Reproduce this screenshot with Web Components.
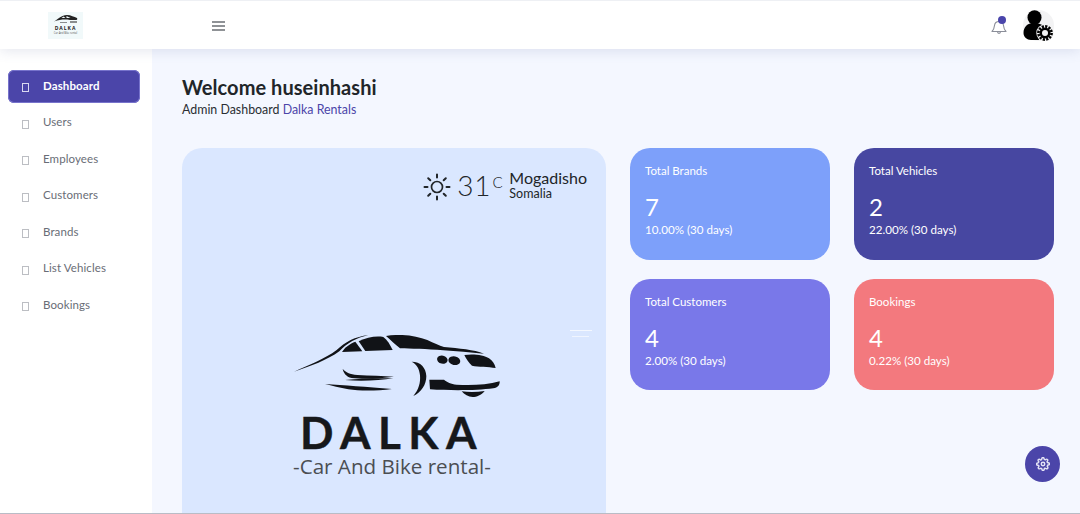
<!DOCTYPE html>
<html lang="en">
<head>
<meta charset="utf-8">
<title>Dalka Rentals</title>
<style>
html,body{margin:0;padding:0;height:514px;overflow:hidden;background:#f4f7ff;}
body{font-family:"Lato","Open Sans",sans-serif;}
</style>
</head>
<body>
<app-shell>
    <top-bar slot="top"></top-bar>
    <side-nav slot="side">
        <nav-item active>Dashboard</nav-item>
        <nav-item>Users</nav-item>
        <nav-item>Employees</nav-item>
        <nav-item>Customers</nav-item>
        <nav-item>Brands</nav-item>
        <nav-item>List Vehicles</nav-item>
        <nav-item>Bookings</nav-item>
    </side-nav>
    <dash-board></dash-board>
</app-shell>
<script>
class appShell extends HTMLElement{
    constructor(){
        super();
        this.attachShadow({ mode: "open" });
    }
    connectedCallback(){
        this.shadowRoot.innerHTML = `
            <style>
                :host{
                    display: flex;
                    flex-direction: column;
                    height: 514px;
                    box-sizing: border-box;
                    border-bottom: 1px solid #b9bcc6;
                    overflow: hidden;
                    position: relative;
                }
                .body{
                    flex: 1;
                    display: flex;
                    min-height: 0;
                }
                .content{
                    flex: 1;
                    min-width: 0;
                }
            </style>
            <slot name="top"></slot>
            <div class="body">
                <slot name="side"></slot>
                <div class="content"><slot></slot></div>
            </div>
        `;
    }
}

class topBar extends HTMLElement{
    constructor(){
        super();
        this.attachShadow({ mode: "open" });
    }
    connectedCallback(){
        this.shadowRoot.innerHTML = `
            <style>
                :host{
                    display: flex;
                    align-items: center;
                    height: 49px;
                    box-sizing: border-box;
                    border-top: 1px solid #eef0f4;
                    background: #fff;
                    box-shadow: 0 2px 12px rgba(90,100,150,.16);
                    position: relative;
                    z-index: 2;
                    padding: 0 26px 0 48px;
                }
                .logo{
                    width: 35px;
                    height: 27px;
                    background: #f1f9fa;
                    display: flex;
                    flex-direction: column;
                    align-items: center;
                    color: #222;
                    font-family: "Open Sans", sans-serif;
                    line-height: 1;
                    overflow: hidden;
                }
                .logo svg{ width: 25px; height: 11px; margin-top: 2px; display: block; }
                .logo b{ font-size: 5px; letter-spacing: 1px; margin-top: 1px; }
                .logo span{ font-size: 2.600px; color: #555; margin-top: 1px; white-space: nowrap; }
                .menu{
                    margin: 2px 0 0 129px;
                    width: 13px;
                    height: 10px;
                    border-top: 2px solid #8f9296;
                    border-bottom: 2px solid #8f9296;
                    box-sizing: border-box;
                    position: relative;
                }
                .menu::after{
                    content: "";
                    position: absolute;
                    left: 0; right: 0; top: 2px;
                    height: 2px;
                    background: #8f9296;
                }
                .spacer{ flex: 1; }
                .bell{ position: relative; width: 16px; height: 20px; margin: 2px 16px 0 0; }
                .bell svg{ display: block; }
                .bell i{
                    position: absolute;
                    top: 0; left: 7px;
                    width: 8px; height: 8px;
                    border-radius: 50%;
                    background: #4a45ab;
                }
                .avatar{ width: 31px; height: 31px; display: block; }
            </style>
            <div class="logo">
                <svg viewBox="0 0 50 22"><path fill="#222" d="M2 15C12 9 16 3 28 2c8 0 14 4 20 6 1 2 1 3-1 4H34C24 10 14 11 2 15z"/><path fill="#f1f9fa" d="M17 8l4-3 4 3zM27 8V4l8 4z"/><path fill="#222" d="M14 17h14v1H14zM34 15h14v2H34z"/></svg>
                <b>DALKA</b>
                <span>Car And Bike rental</span>
            </div>
            <div class="menu"></div>
            <div class="spacer"></div>
            <div class="bell">
                <svg width="16" height="20" viewBox="0 0 16 20" fill="none" stroke="#8b8e99" stroke-width="1.100" stroke-linejoin="round"><path d="M1 15.500c1.500-1.500 2.200-3 2.500-6 .3-2.500 2-4 4.500-4s4.200 1.500 4.500 4c.3 3 1 4.500 2.500 6z"/><path d="M6.500 15.500c0 2.500 3 2.500 3 0"/></svg>
                <i></i>
            </div>
            <svg class="avatar" viewBox="0 0 31 31">
                <circle cx="15.500" cy="15.500" r="15.500" fill="#f3f3f4"/>
                <ellipse cx="11.500" cy="7.500" rx="7" ry="7.300" fill="#000"/>
                <path fill="#000" d="M.5 23c0-6 4-10 10-10 4 0 8 1 10 3-4 2-6 8-4 14H8c-4 0-7.500-3-7.500-7z"/>
                <g transform="translate(22 23)">
                    <circle r="8.700" fill="#f3f3f4"/>
                    <circle r="6.600" fill="none" stroke="#000" stroke-width="2.600" stroke-dasharray="2.200 1.250"/>
                    <circle r="5.500" fill="#000"/>
                    <circle r="3" fill="#f3f3f4"/>
                </g>
            </svg>
        `;
    }
}

class sideNav extends HTMLElement{
    constructor(){
        super();
        this.attachShadow({ mode: "open" });
    }
    connectedCallback(){
        this.shadowRoot.innerHTML = `
            <style>
                :host{
                    display: flex;
                    flex-direction: column;
                    gap: 3.500px;
                    width: 152px;
                    flex: none;
                    box-sizing: border-box;
                    background: #fff;
                    padding: 21px 12px 0 8px;
                }
            </style>
            <slot></slot>
        `;
    }
}

class navItem extends HTMLElement{
    constructor(){
        super();
        this.attachShadow({ mode: "open" });
    }
    connectedCallback(){
        this.shadowRoot.innerHTML = `
            <style>
                :host{
                    display: flex;
                    align-items: center;
                    height: 33px;
                    padding: 0 0 0 14px;
                    border-radius: 6px;
                    font-size: 11.500px;
                    color: #696d76;
                    letter-spacing: .1px;
                }
                :host([active]){
                    background: #4b45a9;
                    color: #fff;
                    font-weight: 700;
                    box-shadow: 0 0 0 1px #7773cc inset;
                }
                .ico{
                    width: 5px;
                    height: 7px;
                    border: 1px solid #bcbec3;
                    margin: 2px 14px 0 0;
                    flex: none;
                }
                :host([active]) .ico{ border-color: #d9d8f0; }
                .lbl{ margin-top: -3px; }
                :host([active]) .lbl{ margin-top: -2px; }
            </style>
            <span class="ico"></span><span class="lbl"><slot></slot></span>
        `;
    }
}

class dashBoard extends HTMLElement{
    constructor(){
        super();
        this.attachShadow({ mode: "open" });
    }
    connectedCallback(){
        this.shadowRoot.innerHTML = `
            <style>
                :host{
                    display: block;
                    padding: 25px 26px 0 30px;
                    color: #212529;
                }
                h1{
                    margin: 0;
                    font-size: 20px;
                    line-height: 27px;
                    font-weight: 700;
                    letter-spacing: .05px;
                }
                p{
                    margin: 0;
                    font-size: 12.400px;
                    line-height: 18px;
                    color: #2a2e33;
                }
                p span{ color: #4b45a9; }
                .grid{
                    display: grid;
                    grid-template-columns: 424px 200px 200px;
                    grid-template-rows: 112px 111px;
                    column-gap: 24px;
                    row-gap: 19px;
                    margin-top: 29px;
                }
                brand-hero{ grid-row: 1 / span 3; }
            </style>
            <h1>Welcome huseinhashi</h1>
            <p>Admin Dashboard <span>Dalka Rentals</span></p>
            <div class="grid">
                <brand-hero></brand-hero>
                <stat-card color="#7da0fa" title="Total Brands" value="7" note="10.00% (30 days)"></stat-card>
                <stat-card color="#4747a1" title="Total Vehicles" value="2" note="22.00% (30 days)"></stat-card>
                <stat-card color="#7978e9" title="Total Customers" value="4" note="2.00% (30 days)"></stat-card>
                <stat-card color="#f3797e" title="Bookings" value="4" note="0.22% (30 days)"></stat-card>
            </div>
            <fab-button></fab-button>
        `;
    }
}

class statCard extends HTMLElement{
    constructor(){
        super();
        this.attachShadow({ mode: "open" });
    }
    connectedCallback(){
        this.shadowRoot.innerHTML = `
            <style>
                :host{
                    display: block;
                    box-sizing: border-box;
                    border-radius: 20px;
                    padding: 15px 15px;
                    color: #fff;
                    background: ${this.getAttribute("color")};
                }
                .t{ font-size: 11.500px; line-height: 15px; }
                .v{ font-size: 24px; line-height: 30px; margin-top: 14px; }
                .n{ font-size: 11.600px; line-height: 15px; }
            </style>
            <div class="t">${this.getAttribute("title")}</div>
            <div class="v">${this.getAttribute("value")}</div>
            <div class="n">${this.getAttribute("note")}</div>
        `;
    }
}

class brandHero extends HTMLElement{
    constructor(){
        super();
        this.attachShadow({ mode: "open" });
    }
    connectedCallback(){
        this.shadowRoot.innerHTML = `
            <style>
                :host{
                    display: block;
                    height: 400px;
                    border-radius: 20px;
                    background: #dae7ff;
                    position: relative;
                    color: #212529;
                }
                .logo{
                    display: flex;
                    flex-direction: column;
                    align-items: center;
                    width: 250px;
                    margin: 133px 0 0 88px;
                }
                .logo svg{ display: block; width: 250px; height: 80px; }
                .name{
                    font-family: "Lato", sans-serif;
                    font-weight: 700;
                    font-size: 44px;
                    line-height: 42px;
                    letter-spacing: 7.500px;
                    color: #16181b;
                    margin: -4px 0 0 -6px;
                    -webkit-text-stroke: .4px #16181b;
                }
                .tag{
                    font-family: "Open Sans", sans-serif;
                    font-size: 20.600px;
                    line-height: 26px;
                    color: #4b4e52;
                    margin: 0 0 0 -6px;
                    white-space: nowrap;
                }
                .bars{
                    position: absolute;
                    left: 388px;
                    top: 182px;
                    width: 22px;
                    height: 8px;
                    border-top: 1.500px solid rgba(255,255,255,.7);
                    filter: blur(.6px);
                }
                .bars::after{
                    content: "";
                    position: absolute;
                    left: 2px; right: 3px; top: 4.500px;
                    height: 1.500px;
                    background: rgba(255,255,255,.6);
                }
            </style>
            <weather-box></weather-box>
            <div class="bars"></div>
            <div class="logo">
                <svg viewBox="0 0 750 240" preserveAspectRatio="none">
                    <g transform="translate(0 -47)" fill="#111317">
                        <path d="M72 157C120 136 165 118 200 92 225 68 255 52 296 47 258 56 232 70 208 96 172 122 122 141 72 157z"/>
                        <path d="M216 98C224 84 240 73 256 67L277 96z"/>
                        <path d="M266 66C290 54 318 49 340 53 352 62 360 76 368 92L286 95z"/>
                        <path d="M348 50C395 42 440 50 472 62 492 71 507 79 522 83 567 87 612 91 642 103 600 100 560 95 520 93 470 89 420 88 390 87 375 75 362 62 348 50z"/>
                        <ellipse cx="517" cy="121" rx="16" ry="12" transform="rotate(12 517 121)"/>
                        <ellipse cx="553" cy="124" rx="18" ry="13" transform="rotate(12 553 124)"/>
                        <path d="M583 107C610 103 642 107 657 117 668 125 674 134 677 146 655 142 625 143 606 139 596 130 588 118 583 107z"/>
                        <path d="M425 127C452 127 468 145 469 170 469 196 454 219 430 230 446 212 452 190 450 168 448 148 440 135 425 127z"/>
                        <path d="M478 181L522 181C532 189 542 194 560 196 600 199 650 197 689 186 690 197 683 205 670 207 620 214 540 214 480 210z"/>
                        <path d="M575 216C595 219 620 219 644 215 634 228 620 233 608 233 595 233 583 226 575 216z"/>
                        <path d="M218 148C225 158 240 165 262 167 300 169 340 170 372 172 330 178 280 180 245 176 228 172 220 160 218 148z"/>
                        <path d="M225 182C270 177 320 176 370 177 330 183 275 187 225 182z"/>
                        <path d="M165 194C220 197 290 203 366 209 320 215 270 215 235 210 210 205 185 199 165 194z"/>
                    </g>
                </svg>
                <div class="name">DALKA</div>
                <div class="tag">-Car And Bike rental-</div>
            </div>
        `;
    }
}

class weatherBox extends HTMLElement{
    constructor(){
        super();
        this.attachShadow({ mode: "open" });
    }
    connectedCallback(){
        this.shadowRoot.innerHTML = `
            <style>
                :host{
                    display: flex;
                    align-items: flex-start;
                    justify-content: flex-end;
                    padding: 20px 19px 0 0;
                    height: 34px;
                    color: #212529;
                }
                svg{ margin: 5px 6px 0 0; flex: none; }
                .deg{ font-size: 28px; line-height: 34px; letter-spacing: .8px; font-weight: 300; }
                sup{ font-size: 15px; line-height: 1; vertical-align: baseline; position: relative; top: -8px; margin-left: 1px; font-weight: 300; }
                .loc{ margin-left: 6px; }
                .city{ font-size: 16px; line-height: 20px; }
                .country{ font-size: 12.500px; line-height: 12px; margin-top: 0; }
            </style>
            <svg width="28" height="28" viewBox="0 0 28 28" fill="none" stroke="#212529" stroke-width="2" stroke-linecap="round">
                <circle cx="14" cy="14" r="5.500" stroke-width="1.700"/>
                <path d="M14 1.500v3M14 23.500v3M1.500 14h3M23.500 14h3M5.200 5.200l2.100 2.100M20.700 20.700l2.100 2.100M5.200 22.800l2.100-2.100M20.700 7.300l2.100-2.100"/>
            </svg>
            <div class="deg">31<sup>C</sup></div>
            <div class="loc">
                <div class="city">Mogadisho</div>
                <div class="country">Somalia</div>
            </div>
        `;
    }
}

class fabButton extends HTMLElement{
    constructor(){
        super();
        this.attachShadow({ mode: "open" });
    }
    connectedCallback(){
        this.shadowRoot.innerHTML = `
            <style>
                :host{
                    position: absolute;
                    left: 1025px;
                    top: 446px;
                    width: 35px;
                    height: 36px;
                    border-radius: 50%;
                    background: #4b45a9;
                    display: flex;
                    align-items: center;
                    justify-content: center;
                    z-index: 3;
                }
            </style>
            <svg width="14" height="14" viewBox="0 0 24 24" fill="none" stroke="#e4e3f5" stroke-width="2.500" stroke-linejoin="round">
                <circle cx="12" cy="12" r="3"/>
                <path d="M19.400 15a1.650 1.650 0 0 0 .33 1.820l.06.06a2 2 0 1 1-2.830 2.830l-.06-.06a1.650 1.650 0 0 0-2.800 1.170V21a2 2 0 1 1-4 0v-.09a1.650 1.650 0 0 0-2.800-1.170l-.06.06a2 2 0 1 1-2.830-2.830l.06-.06a1.650 1.650 0 0 0-1.170-2.800H3a2 2 0 1 1 0-4h.09a1.650 1.650 0 0 0 1.170-2.800l-.06-.06a2 2 0 1 1 2.830-2.830l.06.06a1.650 1.650 0 0 0 2.800-1.170V3a2 2 0 1 1 4 0v.09a1.650 1.650 0 0 0 2.800 1.170l.06-.06a2 2 0 1 1 2.830 2.830l-.06.06a1.650 1.650 0 0 0 1.170 2.800H21a2 2 0 1 1 0 4h-.09a1.650 1.650 0 0 0-1.510 1.110z"/>
            </svg>
        `;
    }
}

window.customElements.define("app-shell", appShell);
window.customElements.define("top-bar", topBar);
window.customElements.define("side-nav", sideNav);
window.customElements.define("nav-item", navItem);
window.customElements.define("dash-board", dashBoard);
window.customElements.define("stat-card", statCard);
window.customElements.define("brand-hero", brandHero);
window.customElements.define("weather-box", weatherBox);
window.customElements.define("fab-button", fabButton);
</script>
</body>
</html>
